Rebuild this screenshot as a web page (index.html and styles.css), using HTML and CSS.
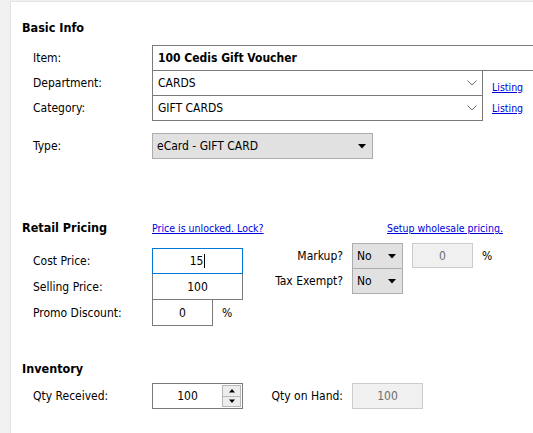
FILE: index.html
```html
<!DOCTYPE html>
<html>
<head>
<meta charset="utf-8">
<link rel="stylesheet" href="styles.css">
</head>
<body>
<div class="panel">
  <section class="basic">
    <div class="section-title">Basic Info</div>
    <div class="rows">
      <div class="row">
        <span class="label">Item:</span>
        <div class="field field-item">100 Cedis Gift Voucher</div>
      </div>
      <div class="row">
        <span class="label">Department:</span>
        <div class="field field-combo">CARDS
          <svg class="chev" width="10" height="6" viewBox="0 0 10 6"><polyline points="0.5,0.5 5,5 9.5,0.5" fill="none" stroke="#6b6b6b" stroke-width="1"/></svg>
        </div>
        <a class="link link-down">Listing</a>
      </div>
      <div class="row">
        <span class="label">Category:</span>
        <div class="field field-combo">GIFT CARDS
          <svg class="chev" width="10" height="6" viewBox="0 0 10 6"><polyline points="0.5,0.5 5,5 9.5,0.5" fill="none" stroke="#6b6b6b" stroke-width="1"/></svg>
        </div>
        <a class="link link-up">Listing</a>
      </div>
      <div class="row row-type">
        <span class="label">Type:</span>
        <div class="field select select-type">eCard - GIFT CARD
          <svg width="8" height="5" viewBox="0 0 8 5"><polygon points="0,0 8,0 4,4.5" fill="#000"/></svg>
        </div>
      </div>
    </div>
  </section>

  <section class="pricing">
    <div class="head-row">
      <div class="section-title head-col">Retail Pricing</div>
      <a class="link link-lock">Price is unlocked. Lock?</a>
      <a class="link">Setup wholesale pricing.</a>
    </div>
    <div class="pricing-body">
      <div class="left">
        <div class="row row-cost">
          <span class="label">Cost Price:</span>
          <div class="field num focus">15<span class="caret"></span></div>
        </div>
        <div class="row row-tall">
          <span class="label">Selling Price:</span>
          <div class="field num">100</div>
        </div>
        <div class="row row-tall">
          <span class="label">Promo Discount:</span>
          <div class="field num num-short">0</div>
          <span class="pct">%</span>
        </div>
      </div>
      <div class="right">
        <div class="rrow">
          <span class="rlabel">Markup?</span>
          <div class="field select select-small">No
            <svg width="8" height="5" viewBox="0 0 8 5"><polygon points="0,0 8,0 4,4.5" fill="#000"/></svg>
          </div>
          <div class="field num disabled markup-val">0</div>
          <span class="pct">%</span>
        </div>
        <div class="rrow">
          <span class="rlabel">Tax Exempt?</span>
          <div class="field select select-small">No
            <svg width="8" height="5" viewBox="0 0 8 5"><polygon points="0,0 8,0 4,4.5" fill="#000"/></svg>
          </div>
        </div>
      </div>
    </div>
  </section>

  <section class="inventory">
    <div class="section-title">Inventory</div>
    <div class="inv-row">
      <div class="row">
        <span class="label">Qty Received:</span>
        <div class="field spin">
          <span class="spin-text">100</span>
          <span class="spin-btns">
            <span class="spin-btn"><svg width="6" height="4" viewBox="0 0 6 4"><polygon points="0,3.5 6,3.5 3,0" fill="#000"/></svg></span>
            <span class="spin-btn"><svg width="6" height="4" viewBox="0 0 6 4"><polygon points="0,0.5 6,0.5 3,4" fill="#000"/></svg></span>
          </span>
        </div>
      </div>
      <div class="rrow">
        <span class="rlabel">Qty on Hand:</span>
        <div class="field num disabled onhand">100</div>
      </div>
    </div>
  </section>
</div>
</body>
</html>
```

FILE: styles.css
```css
html, body {
  margin: 0;
  padding: 0;
}
body {
  background: #f0f0f0;
  font-family: "DejaVu Sans Condensed", "DejaVu Sans", sans-serif;
  font-size: 12px;
  color: #000;
  overflow: hidden;
  height: 433px;
}
.panel {
  margin: 1px 0 0 10px;
  border-top: 1px solid #e3e3e3;
  border-left: 1px solid #e3e3e3;
  background: #fff;
  height: 440px;
  padding: 18px 0 0 11px;
  box-sizing: border-box;
  overflow: hidden;
}
.section-title {
  font-weight: bold;
  font-size: 12.5px;
  line-height: 16px;
  height: 16px;
}
.rows {
  margin-top: 9px;
}
.row {
  display: flex;
  align-items: center;
  height: 26px;
  padding-left: 11px;
}
.row + .row {
  margin-top: -1px;
}
.label {
  width: 119px;
  flex: none;
  line-height: 14px;
}
.field {
  box-sizing: border-box;
  height: 100%;
  border: 1px solid #7a7a7a;
  display: flex;
  align-items: center;
  padding: 0 6px 0 5px;
  flex: none;
  background: #fff;
  white-space: nowrap;
}
.field-item {
  width: 420px;
  font-weight: bold;
}
.field-combo {
  width: 331px;
  justify-content: space-between;
  padding-right: 5px;
}
.link {
  color: #0000dd;
  text-decoration: underline;
  font-size: 10.5px;
  line-height: 14px;
  cursor: pointer;
}
.row .link {
  margin-left: 9px;
}
.link-down {
  align-self: flex-end;
  margin-bottom: 2px;
}
.link-up {
  align-self: flex-start;
  margin-top: 6px;
}
.row.row-type {
  margin-top: 12px;
}
.select {
  background: #e1e1e1;
  border-color: #adadad;
  justify-content: space-between;
  padding: 0 6px 0 4px;
}
.select-type {
  width: 221px;
  padding-right: 6px;
}

/* Pricing */
.pricing {
  margin-top: 61px;
}
.head-row {
  display: flex;
  align-items: center;
  height: 16px;
}
.head-col {
  width: 130px;
  flex: none;
}
.link-lock {
  width: 235px;
  flex: none;
}
.pricing-body {
  display: flex;
  align-items: flex-start;
}
.left {
  margin-top: 12px;
}
.left .row.row-tall {
  height: 27px;
}
.num {
  width: 91px;
  justify-content: center;
  padding: 0;
}
.num-short {
  width: 61px;
}
.focus {
  border-color: #0078d7;
  position: relative;
  z-index: 1;
}
.caret {
  display: inline-block;
  width: 1px;
  height: 14px;
  background: #000;
  margin-left: 1px;
}
.pct {
  margin-left: 9px;
}
.right {
  margin-top: 7px;
  margin-left: 19px;
}
.rrow {
  display: flex;
  align-items: center;
  height: 26px;
}
.rrow + .rrow {
  margin-top: -1px;
}
.rlabel {
  width: 81px;
  text-align: right;
  margin-right: 9px;
  flex: none;
  white-space: nowrap;
}
.select-small {
  width: 51px;
}
.disabled {
  background: #f0f0f0;
  border-color: #cccccc;
  color: #6d6d6d;
}
.markup-val {
  width: 61px;
  margin-left: 9px;
  height: 25px;
  align-self: flex-start;
}

/* Inventory */
.inventory {
  margin-top: 35px;
}
.inv-row {
  display: flex;
  align-items: center;
  margin-top: 6px;
}
.inv-row .rrow {
  margin-left: 19px;
}
.spin {
  width: 91px;
  padding: 1px 1px 1px 0;
}
.spin-text {
  flex: 1;
  text-align: center;
}
.spin-btns {
  display: flex;
  flex-direction: column;
  width: 19px;
  height: 100%;
}
.spin-btn {
  flex: 1;
  box-sizing: border-box;
  border: 1px solid #b8b8b8;
  background: #ececec;
  display: flex;
  align-items: center;
  justify-content: center;
}
.spin-btn + .spin-btn {
  margin-top: -1px;
}
.onhand {
  width: 71px;
}
```
